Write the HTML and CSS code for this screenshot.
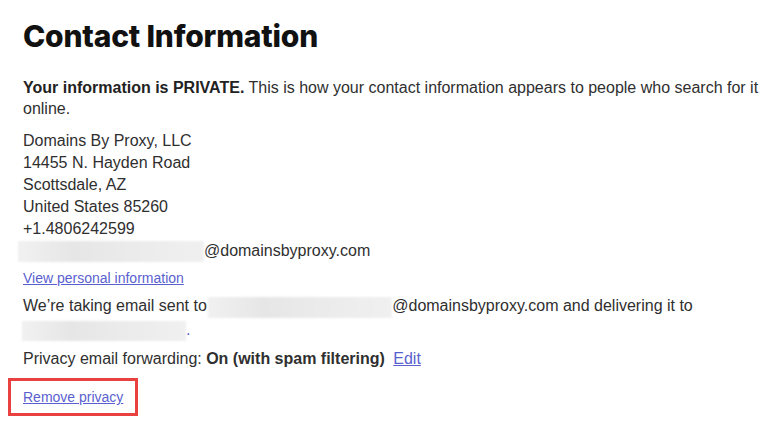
FILE: index.html
```html
<!DOCTYPE html>
<html lang="en">
<head>
  <meta charset="UTF-8" />
  <title>Contact Information</title>
  <link rel="stylesheet" href="styles.css">
</head>
<body>

  <div class="page">
    <h1 class="title">Contact Information</h1>

    <p class="intro"><strong>Your information is PRIVATE.</strong> This is how your contact information appears to people who search for it online.</p>

    <div class="address">
      <div>Domains By Proxy, LLC</div>
      <div>14455 N. Hayden Road</div>
      <div>Scottsdale, AZ</div>
      <div>United States 85260</div>
      <div>+1.4806242599</div>
      <div><span class="blur blur-email"></span>@domainsbyproxy.com</div>
    </div>

    <a class="small-link view-link" href="#">View personal information</a>

    <p class="forward">We’re taking email sent to <span class="blur blur-mid"></span>@domainsbyproxy.com and delivering it to <span class="blur blur-short"></span><span class="dot">.</span></p>

    <p class="privacy">Privacy email forwarding: <strong>On (with spam filtering)</strong> <a class="edit" href="#">Edit</a></p>

    <div class="remove-box">
      <a class="small-link" href="#">Remove privacy</a>
    </div>
  </div>

</body>
</html>
```

FILE: styles.css
```css
body {
  margin: 0;
  background-color: #fff;
  color: #2f2f2f;
  font-family: "Liberation Sans", Arial, sans-serif;
  font-size: 16px;
}

.page {
  padding: 16px 23px 0 23px;
}

.title {
  margin: 0;
  font-family: Inter, "DejaVu Sans", sans-serif;
  font-weight: 800;
  font-size: 30px;
  letter-spacing: -0.2px;
  color: #111;
  line-height: 40px;
}

.intro {
  margin: 21px 0 0 0;
  line-height: 21px;
}

.intro strong {
  color: #222;
}

.address {
  margin-top: 11px;
  line-height: 22px;
}

.blur {
  display: inline-block;
  vertical-align: middle;
  height: 21px;
  background: linear-gradient(90deg, #f1f1f1, #e6e6e6 30%, #ebebeb 60%, #f0f0f0);
  filter: blur(1px);
}

.blur-email {
  width: 186px;
  margin-left: -5px;
}

.blur-mid {
  width: 184px;
  margin-left: -3px;
}

.blur-short {
  width: 164px;
  margin-left: -1px;
  height: 20px;
}

.dot {
  color: #5560c8;
}

.small-link {
  font-size: 14px;
  color: #5a5fd0;
  text-decoration: underline;
}

.view-link {
  display: block;
  margin-top: 8px;
  line-height: 16px;
}

.forward {
  margin: 8px 0 0 0;
  line-height: 24px;
}

.privacy {
  margin: 6px 0 0 0;
  line-height: 22px;
}

.edit {
  color: #5a5fd0;
  margin-left: 4px;
}

.remove-box {
  display: inline-block;
  margin: 8px 0 0 -15px;
  padding: 8px 12px 8px 12px;
  border: 3px solid #e8413f;
  line-height: 16px;
}
```
